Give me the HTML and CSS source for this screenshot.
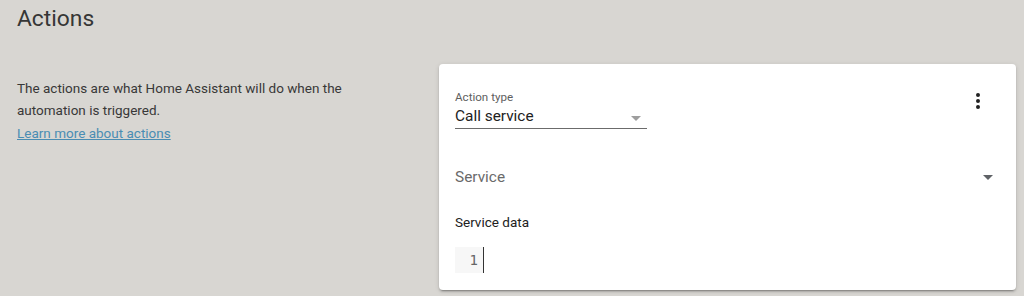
FILE: index.html
```html
<!DOCTYPE html>
<html>
<head>
<meta charset="utf-8">
<link rel="stylesheet" href="styles.css">
</head>
<body>
<h1 class="title">Actions</h1>
<div class="section">
  <div class="intro">
    <p class="desc">The actions are what Home Assistant will do when the automation is triggered.</p>
    <a class="learn" href="#">Learn more about actions</a>
  </div>
  <div class="card">
    <div class="card-head">
      <div class="select">
        <div class="select-label">Action type</div>
        <div class="select-value">
          <span>Call service</span>
          <span class="small-arrow"></span>
        </div>
      </div>
      <svg class="menu" viewBox="0 0 24 24" width="24" height="24"><path d="M12,16A2,2 0 0,1 14,18A2,2 0 0,1 12,20A2,2 0 0,1 10,18A2,2 0 0,1 12,16M12,10A2,2 0 0,1 14,12A2,2 0 0,1 12,14A2,2 0 0,1 10,12A2,2 0 0,1 12,10M12,4A2,2 0 0,1 14,6A2,2 0 0,1 12,8A2,2 0 0,1 10,6A2,2 0 0,1 12,4Z" fill="#212121"/></svg>
    </div>
    <div class="service">
      <span>Service</span>
      <svg viewBox="0 0 24 24" width="24" height="24"><path d="M7,10L12,15L17,10H7Z" fill="#5f6266"/></svg>
    </div>
    <div class="data-label">Service data</div>
    <div class="code">
      <div class="gutter">1</div>
      <div class="cursor"></div>
    </div>
  </div>
</div>
</body>
</html>
```
FILE: styles.css
```css
html, body {
  margin: 0;
  padding: 0;
  background: #d8d6d2;
  font-family: Roboto, "Noto Sans", sans-serif;
  color: #333;
  height: 296px;
  overflow: hidden;
}
.title {
  margin: 3px 0 0 17px;
  font-size: 22.8px;
  line-height: 32px;
  font-weight: 400;
  color: #363636;
}
.section {
  display: flex;
  margin-top: 29px;
  padding: 0 8px 0 17px;
}
.intro {
  width: 380px;
  flex: 0 0 380px;
  padding-top: 13px;
  margin-right: 42px;
}
.desc {
  margin: 0;
  font-size: 13.5px;
  line-height: 22px;
  color: #383838;
}
.learn {
  display: block;
  font-size: 13.5px;
  line-height: 24px;
  color: #4a8db3;
  text-decoration: underline;
}
.card {
  flex: 1;
  background: #fff;
  border-radius: 4px;
  padding: 16px;
  height: 194px;
  box-shadow: 0 2px 2px 0 rgba(0,0,0,.14), 0 1px 5px 0 rgba(0,0,0,.12), 0 3px 1px -2px rgba(0,0,0,.2);
}
.card-head {
  display: flex;
  justify-content: space-between;
  align-items: flex-start;
}
.select {
  width: 192px;
  margin-top: 9px;
}
.select-label {
  font-size: 11.6px;
  line-height: 17px;
  color: #5e5e5e;
}
.select-value {
  display: flex;
  justify-content: space-between;
  align-items: center;
  font-size: 15.4px;
  line-height: 21px;
  color: #212121;
  padding-bottom: 1px;
  border-bottom: 1px solid #6b6b6b;
}
.small-arrow {
  width: 0;
  height: 0;
  border-left: 5px solid transparent;
  border-right: 5px solid transparent;
  border-top: 5px solid #9e9e9e;
  margin-right: 6px;
  margin-top: 3px;
}
.menu {
  margin-top: 9px;
  margin-right: 10px;
}
.service {
  display: flex;
  justify-content: space-between;
  align-items: center;
  margin-top: 36px;
  font-size: 15.4px;
  line-height: 24px;
  color: #6a6a6a;
}
.data-label {
  margin-top: 23px;
  font-size: 13.5px;
  line-height: 20px;
  color: #212121;
}
.code {
  display: flex;
  margin-top: 15px;
  height: 26px;
}
.gutter {
  width: 23px;
  padding-right: 5px;
  background: #f7f7f7;
  text-align: right;
  font-family: "DejaVu Sans Mono", monospace;
  font-size: 14px;
  line-height: 26px;
  color: #666;
}
.cursor {
  width: 1px;
  height: 26px;
  background: #333;
}
```
